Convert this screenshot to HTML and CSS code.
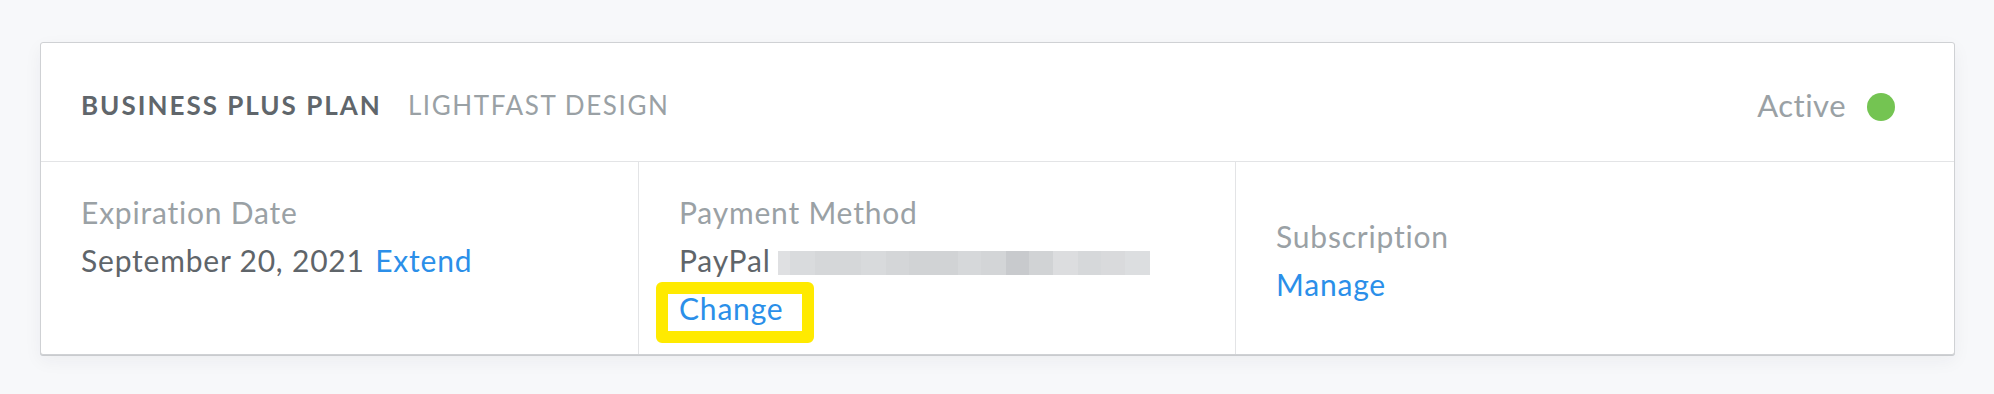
FILE: index.html
```html
<!DOCTYPE html>
<html lang="en">
<head>
<meta charset="utf-8">
<title>Plan</title>
<link rel="stylesheet" href="styles.css">
</head>
<body>
<div class="page">
  <section class="card">
    <header class="card-head">
      <div class="plan">
        <span class="plan-name">BUSINESS PLUS PLAN</span>
        <span class="plan-org">LIGHTFAST DESIGN</span>
      </div>
      <div class="status">
        <span class="status-text">Active</span>
        <span class="status-dot"></span>
      </div>
    </header>
    <div class="card-body">
      <div class="col">
        <div class="label">Expiration Date</div>
        <div class="value">September 20, 2021 <a class="link link-extend" href="#">Extend</a></div>
      </div>
      <div class="col">
        <div class="label">Payment Method</div>
        <div class="value">PayPal <span class="redacted"></span></div>
        <div class="value"><a class="link highlight" href="#">Change</a></div>
      </div>
      <div class="col col-center">
        <div class="label">Subscription</div>
        <div class="value"><a class="link" href="#">Manage</a></div>
      </div>
    </div>
  </section>
</div>
</body>
</html>
```

FILE: styles.css
```css
html, body {
  margin: 0;
  padding: 0;
  background: #f7f8fa;
}

body {
  font-family: "Lato", "Open Sans", "Liberation Sans", sans-serif;
  -webkit-font-smoothing: antialiased;
}

.page {
  padding: 42px 39px 38px 40px;
}

.card {
  background: #ffffff;
  border: 1px solid #cfd1d4;
  border-radius: 3px;
  box-shadow: 0 1px 0 #c9cbce, 0 6px 18px rgba(30, 40, 60, 0.05);
}

.card-head {
  box-sizing: border-box;
  display: flex;
  align-items: center;
  justify-content: space-between;
  height: 119px;
  padding: 5px 59px 0 40px;
  border-bottom: 1px solid #e3e4e6;
}

.plan {
  display: flex;
  align-items: baseline;
  gap: 26px;
}

.plan-name {
  font-size: 26px;
  font-weight: 700;
  letter-spacing: 2px;
  color: #60666b;
}

.plan-org {
  font-size: 26px;
  font-weight: 400;
  letter-spacing: 1.6px;
  color: #9aa1a5;
}

.status {
  display: flex;
  align-items: center;
  gap: 21px;
}

.status-text {
  font-size: 31px;
  letter-spacing: 0.5px;
  color: #9aa1a5;
}

.status-dot {
  width: 28px;
  height: 28px;
  margin-top: 4px;
  border-radius: 50%;
  background: #74c452;
}

.card-body {
  display: grid;
  grid-template-columns: 597px 597px 1fr;
}

.col {
  padding: 26px 40px 22px;
  font-size: 30px;
  letter-spacing: 0.8px;
  line-height: 48px;
}

.col + .col {
  border-left: 1px solid #e3e4e6;
}

.col-center {
  display: flex;
  flex-direction: column;
  justify-content: center;
}

.label {
  color: #9aa1a5;
}

.value {
  color: #5f656a;
}

.link {
  color: #2b8fe9;
  text-decoration: none;
}

.link-extend {
  margin-left: 2px;
}

.redacted {
  display: inline-block;
  width: 372px;
  height: 24px;
  margin-left: -1px;
  vertical-align: -3px;
  background: linear-gradient(90deg,
    #dfe0e2 0 12px,
    #d9dbdd 12px 37px,
    #d5d7d9 37px 83px,
    #d8dadc 83px 108px,
    #d4d6d8 108px 131px,
    #d1d3d5 131px 180px,
    #d6d8da 180px 203px,
    #d3d5d7 203px 228px,
    #c8cacd 228px 251px,
    #d1d3d5 251px 275px,
    #dcdddf 275px 300px,
    #d6d8da 300px 323px,
    #d9dadc 323px 347px,
    #dcdee0 347px 372px);
}

.highlight {
  position: relative;
}

.highlight::after {
  content: "";
  position: absolute;
  left: -23px;
  right: -31px;
  top: -8px;
  bottom: -17px;
  border: 12px solid #ffea00;
  border-radius: 6px;
}
```
